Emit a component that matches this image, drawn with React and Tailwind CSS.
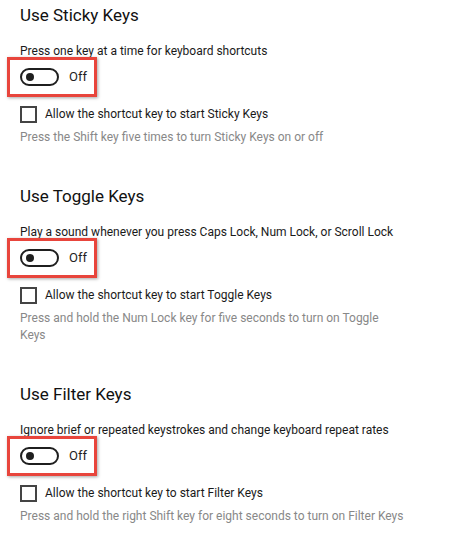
const sections = [
  {
    title: 'Use Sticky Keys',
    desc: 'Press one key at a time for keyboard shortcuts',
    check: 'Allow the shortcut key to start Sticky Keys',
    hint: 'Press the Shift key five times to turn Sticky Keys on or off',
  },
  {
    title: 'Use Toggle Keys',
    desc: 'Play a sound whenever you press Caps Lock, Num Lock, or Scroll Lock',
    check: 'Allow the shortcut key to start Toggle Keys',
    hint: 'Press and hold the Num Lock key for five seconds to turn on Toggle\nKeys',
  },
  {
    title: 'Use Filter Keys',
    desc: 'Ignore brief or repeated keystrokes and change keyboard repeat rates',
    check: 'Allow the shortcut key to start Filter Keys',
    hint: 'Press and hold the right Shift key for eight seconds to turn on Filter Keys',
  },
];

function Toggle() {
  return (
    <div className="relative flex h-[20px] items-center">
      <div className="flex h-[18px] w-[39px] items-center rounded-full border-2 border-[#1f1f1f] pl-[4px]">
        <div className="h-[8px] w-[8px] rounded-full bg-[#1f1f1f]" />
      </div>
      <span className="ml-[10px] text-[13px] text-[#1f1f1f]">Off</span>
      <div className="pointer-events-none absolute left-[-13px] top-[-10px] h-[40px] w-[90px] border-[3px] border-[#e8453c] shadow-[1px_1px_3px_rgba(0,0,0,0.35)]" />
    </div>
  );
}

function Section({ s, first }) {
  return (
    <section className={first ? 'pt-[3px]' : 'mt-[38px]'}>
      <h2 className="text-[17px] leading-[24px] text-[#111]">{s.title}</h2>
      <p className="mt-[15px] text-[12px] leading-[18px] text-[#1a1a1a]">{s.desc}</p>
      <div className="mt-[7px]">
        <Toggle />
      </div>
      <label className="mt-[17px] flex h-[20px] items-center">
        <span className="h-[17px] w-[17px] border-2 border-[#444]" />
        <span className="ml-[8px] text-[12px] text-[#1a1a1a]">{s.check}</span>
      </label>
      <p className="mt-[5px] whitespace-pre-line text-[12px] leading-[17px] text-[#888]">{s.hint}</p>
    </section>
  );
}

export default function App() {
  return (
    <div className="min-h-[533px] bg-white pl-[20px] font-['Roboto',sans-serif]">
      {sections.map((s, i) => (
        <Section key={s.title} s={s} first={i === 0} />
      ))}
    </div>
  );
}
